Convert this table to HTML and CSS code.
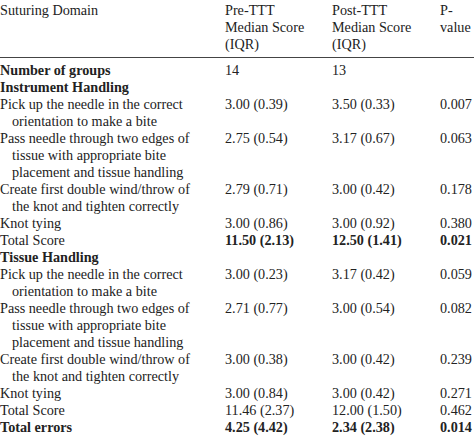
FILE: index.html
```html
<!DOCTYPE html>
<html>
<head>
<meta charset="utf-8">
<link rel="stylesheet" href="styles.css">
</head>
<body>
<table class="tbl">
  <colgroup>
    <col class="c1"><col class="c2"><col class="c3"><col class="c4">
  </colgroup>
  <thead>
    <tr>
      <th>Suturing Domain</th>
      <th>Pre-TTT<br>Median Score<br>(IQR)</th>
      <th>Post-TTT<br>Median Score<br>(IQR)</th>
      <th>P-<br>value</th>
    </tr>
  </thead>
  <tbody>
    <tr class="first bl"><td>Number of groups</td><td>14</td><td>13</td><td></td></tr>
    <tr class="b"><td>Instrument Handling</td><td></td><td></td><td></td></tr>
    <tr><td>Pick up the needle in the correct<br>orientation to make a bite</td><td>3.00 (0.39)</td><td>3.50 (0.33)</td><td>0.007</td></tr>
    <tr><td>Pass needle through two edges of<br>tissue with appropriate bite<br>placement and tissue handling</td><td>2.75 (0.54)</td><td>3.17 (0.67)</td><td>0.063</td></tr>
    <tr><td>Create first double wind/throw of<br>the knot and tighten correctly</td><td>2.79 (0.71)</td><td>3.00 (0.42)</td><td>0.178</td></tr>
    <tr><td>Knot tying</td><td>3.00 (0.86)</td><td>3.00 (0.92)</td><td>0.380</td></tr>
    <tr class="bv"><td>Total Score</td><td>11.50 (2.13)</td><td>12.50 (1.41)</td><td>0.021</td></tr>
    <tr class="b"><td>Tissue Handling</td><td></td><td></td><td></td></tr>
    <tr><td>Pick up the needle in the correct<br>orientation to make a bite</td><td>3.00 (0.23)</td><td>3.17 (0.42)</td><td>0.059</td></tr>
    <tr><td>Pass needle through two edges of<br>tissue with appropriate bite<br>placement and tissue handling</td><td>2.71 (0.77)</td><td>3.00 (0.54)</td><td>0.082</td></tr>
    <tr><td>Create first double wind/throw of<br>the knot and tighten correctly</td><td>3.00 (0.38)</td><td>3.00 (0.42)</td><td>0.239</td></tr>
    <tr><td>Knot tying</td><td>3.00 (0.84)</td><td>3.00 (0.42)</td><td>0.271</td></tr>
    <tr><td>Total Score</td><td>11.46 (2.37)</td><td>12.00 (1.50)</td><td>0.462</td></tr>
    <tr class="b"><td>Total errors</td><td>4.25 (4.42)</td><td>2.34 (2.38)</td><td>0.014</td></tr>
  </tbody>
</table>
</body>
</html>
```
FILE: styles.css
```css
html, body {
  margin: 0;
  padding: 0;
  background: #ffffff;
}
body {
  font-family: "Liberation Serif", "Times New Roman", serif;
  font-size: 14.2px;
  line-height: 17px;
  color: #222222;
}
.tbl {
  border-collapse: collapse;
  table-layout: fixed;
  width: 474px;
}
.c1 { width: 225px; }
.c2 { width: 107px; }
.c3 { width: 108px; }
.c4 { width: 34px; }
.tbl th {
  font-weight: normal;
  text-align: left;
  vertical-align: top;
  padding: 2px 0 4px 0;
  border-bottom: 1px solid #444444;
  white-space: nowrap;
}
.tbl td {
  padding: 0;
  vertical-align: top;
  white-space: nowrap;
}
.tbl td:first-child {
  padding-left: 12px;
  text-indent: -12px;
}
.tbl tr.first td {
  padding-top: 4px;
}
.tbl tr.b td { font-weight: bold; }
.tbl tr.bl td:first-child { font-weight: bold; }
.tbl tr.bv td:not(:first-child) { font-weight: bold; }
```
